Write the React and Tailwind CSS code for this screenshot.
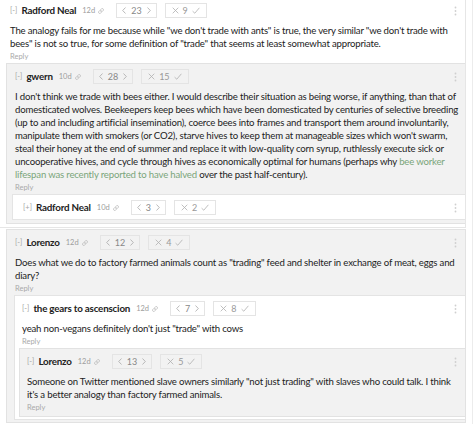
import React from "react";

const FONT = "font-['Lato',sans-serif]";

function LinkIcon() {
  return (
    <svg width="6" height="6" viewBox="0 0 24 24" fill="none" stroke="#b5b5b5" strokeWidth="3" strokeLinecap="round" className="ml-[3px]">
      <path d="M10 13a5 5 0 0 0 7.54.54l3-3a5 5 0 0 0-7.07-7.07l-1.72 1.71" />
      <path d="M14 11a5 5 0 0 0-7.54-.54l-3 3a5 5 0 0 0 7.07 7.07l1.71-1.71" />
    </svg>
  );
}

function Chev({ dir }) {
  return (
    <svg width="4" height="7" viewBox="0 0 4 7" fill="none" stroke="#a8a8a8" strokeWidth="0.8">
      {dir === "l" ? <path d="M3.5 0.5 L0.7 3.5 L3.5 6.5" /> : <path d="M0.5 0.5 L3.3 3.5 L0.5 6.5" />}
    </svg>
  );
}

function Cross() {
  return (
    <svg width="7" height="7" viewBox="0 0 7 7" fill="none" stroke="#b0b0b0" strokeWidth="0.8">
      <path d="M0.7 0.7 L6.3 6.3 M6.3 0.7 L0.7 6.3" />
    </svg>
  );
}

function Check() {
  return (
    <svg width="8" height="7" viewBox="0 0 8 7" fill="none" stroke="#b0b0b0" strokeWidth="0.8">
      <path d="M0.6 4.2 L2.8 6.2 L7.4 0.8" />
    </svg>
  );
}

function Dots() {
  return (
    <svg width="3" height="10" viewBox="0 0 3 10" className="ml-auto">
      <circle cx="1.5" cy="1.5" r="0.9" fill="#cfcfcf" />
      <circle cx="1.5" cy="5" r="0.9" fill="#cfcfcf" />
      <circle cx="1.5" cy="8.5" r="0.9" fill="#cfcfcf" />
    </svg>
  );
}

function Header({ toggle = "[-]", name, age, karma, agree }) {
  return (
    <div className="flex h-[15px] items-center pr-[8px]">
      <span className="text-[7.5px] tracking-normal text-[#a5a5a5]">{toggle}</span>
      <span className="ml-[4px] text-[9.8px] font-bold tracking-[-0.2px] text-[#222]">{name}</span>
      <span className="ml-[6px] text-[7.5px] tracking-normal text-[#9d9d9d]">{age}</span>
      <LinkIcon />
      <div className="ml-[12px] flex h-[15px] items-center gap-[5px] border border-[#e4e4e4] px-[5px]">
        <Chev dir="l" />
        <span className="text-[9px] tracking-normal text-[#888]">{karma}</span>
        <Chev dir="r" />
      </div>
      <div className="ml-[8px] flex h-[15px] items-center gap-[4px] border border-[#e4e4e4] px-[6px]">
        <Cross />
        <span className="text-[9px] tracking-normal text-[#999]">{agree}</span>
        <Check />
      </div>
      <Dots />
    </div>
  );
}

function Reply() {
  return <div className="text-[7.5px] leading-[13px] tracking-normal text-[#a9a9a9]">Reply</div>;
}

function Body({ children }) {
  return (
    <div className="mt-[6px] whitespace-nowrap text-[9.6px] leading-[13px] tracking-[-0.18px] text-[#222]">
      {children}
    </div>
  );
}

export default function App() {
  return (
    <div className={`${FONT} h-[424px] w-[474px] overflow-hidden bg-white`}>
      <div className="w-[473px] border-r border-[#ececec] pb-[4px]">
        {/* Radford Neal */}
        <div className="-mt-[3px] w-[466px] border border-l-0 border-[#e6e6e6] bg-white pb-[2px] pl-[10px] pt-[5px]">
          <Header name="Radford Neal" age="12d" karma="23" agree="9" />
          <Body>
            The analogy fails for me because while "we don't trade with ants" is true, the very similar "we don't trade with
            <br />
            bees" is not so true, for some definition of "trade" that seems at least somewhat appropriate.
          </Body>
          <Reply />
          {/* gwern */}
          <div className="-ml-[4px] mb-[1px] border border-r-0 border-[#e2e2e2] bg-[#f2f2f2] pb-[3px] pl-[8px] pt-[5px]">
            <Header name="gwern" age="10d" karma="28" agree="15" />
            <Body>
              I don't think we trade with bees either. I would describe their situation as being worse, if anything, than that of
              <br />
              domesticated wolves. Beekeepers keep bees which have been domesticated by centuries of selective breeding
              <br />
              (up to and including artificial insemination), coerce bees into frames and transport them around involuntarily,
              <br />
              manipulate them with smokers (or CO2), starve hives to keep them at manageable sizes which won't swarm,
              <br />
              steal their honey at the end of summer and replace it with low-quality corn syrup, ruthlessly execute sick or
              <br />
              uncooperative hives, and cycle through hives as economically optimal for humans (perhaps why{" "}
              <span className="text-[#7aa57a]">bee worker</span>
              <br />
              <span className="text-[#7aa57a]">lifespan was recently reported to have halved</span> over the past half-century).
            </Body>
            <Reply />
            {/* Radford Neal collapsed */}
            <div className="-ml-[3px] border border-r-0 border-[#e4e4e4] bg-white pb-[4px] pl-[10px] pt-[5px]">
              <Header toggle="[+]" name="Radford Neal" age="10d" karma="3" agree="2" />
            </div>
          </div>
        </div>

        {/* Lorenzo */}
        <div className="ml-[6px] mt-[1px] w-[460px] border border-[#e2e2e2] bg-[#f2f2f2] pb-[2px] pl-[8px] pt-[5px]">
          <Header name="Lorenzo" age="12d" karma="12" agree="4" />
          <Body>
            Does what we do to factory farmed animals count as "trading" feed and shelter in exchange of meat, eggs and
            <br />
            diary?
          </Body>
          <Reply />
          {/* the gears to ascenscion */}
          <div className="-ml-[1px] border border-r-0 border-[#e4e4e4] bg-white pb-[2px] pl-[7px] pt-[5px]">
            <Header name="the gears to ascenscion" age="12d" karma="7" agree="8" />
            <Body>yeah non-vegans definitely don't just "trade" with cows</Body>
            <Reply />
            {/* Lorenzo 2 */}
            <div className="-ml-[3px] border border-r-0 border-[#e2e2e2] bg-[#f2f2f2] pb-[2px] pl-[7px] pt-[5px]">
              <Header name="Lorenzo" age="12d" karma="13" agree="5" />
              <Body>
                Someone on Twitter mentioned slave owners similarly "not just trading" with slaves who could talk. I think
                <br />
                it's a better analogy than factory farmed animals.
              </Body>
              <Reply />
            </div>
          </div>
        </div>
      </div>
    </div>
  );
}
